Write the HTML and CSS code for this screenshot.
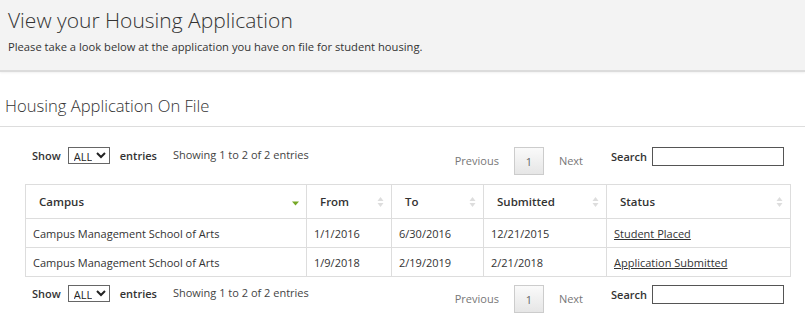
FILE: index.html
```html
<!DOCTYPE html>
<html lang="en">
<head>
    <meta charset="UTF-8">
    <title>View your Housing Application</title>
    <link rel="stylesheet" href="styles.css">
</head>
<body>

    <div class="banner">
        <h1>View your Housing Application</h1>
        <p>Please take a look below at the application you have on file for student housing.</p>
    </div>

    <h2 class="section">Housing Application On File</h2>

    <div class="wrap">
        <div class="controls">
            <div class="left">
                <label class="len">Show <select><option>ALL</option></select> entries</label>
                <span class="info">Showing 1 to 2 of 2 entries</span>
            </div>
            <div class="right">
                <div class="pager">
                    <span class="nav">Previous</span>
                    <span class="page">1</span>
                    <span class="nav">Next</span>
                </div>
                <label class="search">Search <input type="text"></label>
            </div>
        </div>

        <table class="grid">
            <thead>
                <tr>
                    <th class="c-campus sorted">Campus</th>
                    <th class="c-from">From</th>
                    <th class="c-to">To</th>
                    <th class="c-sub">Submitted</th>
                    <th class="c-status">Status</th>
                </tr>
            </thead>
            <tbody>
                <tr>
                    <td>Campus Management School of Arts</td>
                    <td>1/1/2016</td>
                    <td>6/30/2016</td>
                    <td>12/21/2015</td>
                    <td><a href="#">Student Placed</a></td>
                </tr>
                <tr>
                    <td>Campus Management School of Arts</td>
                    <td>1/9/2018</td>
                    <td>2/19/2019</td>
                    <td>2/21/2018</td>
                    <td><a href="#">Application Submitted</a></td>
                </tr>
            </tbody>
        </table>

        <div class="controls bottom">
            <div class="left">
                <label class="len">Show <select><option>ALL</option></select> entries</label>
                <span class="info">Showing 1 to 2 of 2 entries</span>
            </div>
            <div class="right">
                <div class="pager">
                    <span class="nav">Previous</span>
                    <span class="page">1</span>
                    <span class="nav">Next</span>
                </div>
                <label class="search">Search <input type="text"></label>
            </div>
        </div>
    </div>

</body>
</html>
```

FILE: styles.css
```css
body{
    margin: 0;
    font-family: "Open Sans", "Liberation Sans", sans-serif;
    color: #333;
    background: #fff;
}

.banner{
    background: #f3f3f3;
    height: 72px;
    padding: 0 8px;
    box-sizing: border-box;
    border-bottom: 2px solid #dcdcdc;
    box-shadow: 0 1px 2px rgba(0,0,0,0.06);
    overflow: hidden;
}
.banner h1{
    margin: 5px 0 0;
    font-size: 21px;
    font-weight: 300;
    line-height: 30px;
}
.banner p{
    margin: 4px 0 0;
    font-size: 11.2px;
    line-height: 16px;
}

.section{
    margin: 22px 0 0;
    padding: 0 5px 8px;
    font-size: 16.6px;
    font-weight: 300;
    line-height: 24px;
    border-bottom: 1px solid #ddd;
}

.wrap{
    padding: 0 15px 0 25px;
}

.controls{
    display: flex;
    justify-content: space-between;
    margin-top: 20px;
    height: 37px;
    font-size: 11px;
}
.controls.bottom{
    margin-top: 8px;
    height: 29px;
}
.left{
    display: flex;
    align-items: flex-start;
    padding-left: 7px;
}
.len{
    font-weight: 600;
    display: flex;
    align-items: center;
    gap: 5px;
    height: 17px;
}
.len select{
    font-family: inherit;
    font-size: 11px;
    height: 17px;
    width: 42px;
    padding: 0 1px;
    border: 1px solid #666;
    border-radius: 0;
    background: #fff;
    color: #222;
    margin: 0 5px 0 2px;
}
.info{
    margin-left: 16px;
    line-height: 15px;
    color: #444;
}

.right{
    display: flex;
    align-items: flex-start;
    margin-right: 6px;
}
.pager{
    display: flex;
    align-items: center;
    height: 29px;
    margin-top: -1px;
}
.nav{
    color: #777;
    padding: 0 15px;
    font-size: 11px;
}
.page{
    display: inline-block;
    width: 30px;
    height: 28px;
    line-height: 28px;
    text-align: center;
    box-sizing: border-box;
    border: 1px solid #ccc;
    background: linear-gradient(#fafafa, #e6e6e6);
    color: #666;
}
.search{
    display: flex;
    align-items: center;
    gap: 5px;
    margin-left: 13px;
    font-weight: 600;
    height: 19px;
}
.search input{
    width: 132px;
    height: 19px;
    box-sizing: border-box;
    border: 1px solid #555;
    margin: 0;
    padding: 0 3px;
}

.grid{
    width: 766px;
    border-collapse: collapse;
    font-size: 11px;
}
.grid th, .grid td{
    border: 1px solid #ddd;
    text-align: left;
}
.grid th{
    height: 33px;
    padding: 0 20px 0 13px;
    font-size: 11.5px;
    font-weight: 600;
    background-image: url("data:image/svg+xml,%3Csvg xmlns='http://www.w3.org/2000/svg' width='7' height='12'%3E%3Cpath d='M3.5 1L6.5 5H0.5Z' fill='%23ddd'/%3E%3Cpath d='M3.5 11L6.5 7H0.5Z' fill='%23ddd'/%3E%3C/svg%3E");
    background-repeat: no-repeat;
    background-position: right 7px center;
}
.grid th.sorted{
    background-image: url("data:image/svg+xml,%3Csvg xmlns='http://www.w3.org/2000/svg' width='7' height='12'%3E%3Cpath d='M3.5 9.5L7 5.5H0Z' fill='%2376a826'/%3E%3C/svg%3E");
}
.grid td{
    height: 28px;
    padding: 0 7px;
}
.c-campus{ width: 281px; box-sizing: border-box; }
.c-from{ width: 85px; box-sizing: border-box; }
.c-to{ width: 92px; box-sizing: border-box; }
.c-sub{ width: 123px; box-sizing: border-box; }
.grid a{
    color: #333;
}
```
